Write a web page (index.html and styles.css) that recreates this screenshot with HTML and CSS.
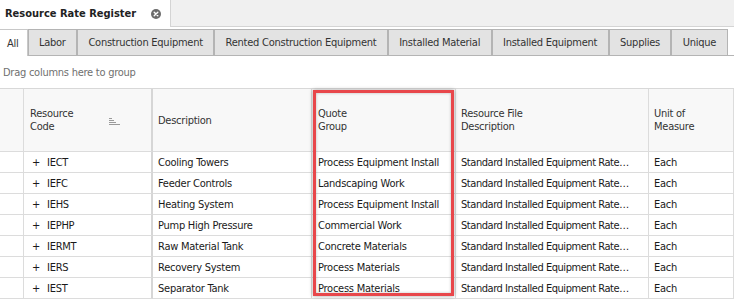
FILE: index.html
```html
<!DOCTYPE html>
<html>
<head>
<meta charset="utf-8">
<link rel="stylesheet" href="styles.css">
</head>
<body>
<div class="app">
  <div class="titlebar">
    <div class="doc-tab">
      <span class="doc-title">Resource Rate Register</span>
      <svg class="close" width="10" height="10" viewBox="0 0 10 10"><circle cx="5" cy="5" r="5" fill="#6b6b6b"/><path d="M3.2 3.2 L6.8 6.8 M6.8 3.2 L3.2 6.8" stroke="#fff" stroke-width="1.4" stroke-linecap="round"/></svg>
    </div>
    <div class="titlebar-rest"></div>
  </div>
  <div class="tabstrip">
    <div class="tab active">All</div>
    <div class="tab">Labor</div>
    <div class="tab">Construction Equipment</div>
    <div class="tab">Rented Construction Equipment</div>
    <div class="tab">Installed Material</div>
    <div class="tab">Installed Equipment</div>
    <div class="tab">Supplies</div>
    <div class="tab">Unique</div>
  </div>
  <div class="grouppanel">Drag columns here to group</div>
  <div class="grid">
    <div class="hcell c0"></div>
    <div class="hcell c1"><span>Resource<br>Code</span>
      <svg class="sorticon" width="12" height="10" viewBox="0 0 12 10"><path d="M0 1.5H3M0 3.5H5M0 5.5H7M0 7.5H11" stroke="#9a9a9a" stroke-width="1"/></svg>
    </div>
    <div class="hcell c2"><span>Description</span></div>
    <div class="hcell c3"><span>Quote<br>Group</span></div>
    <div class="hcell c4"><span>Resource File<br>Description</span></div>
    <div class="hcell c5"><span>Unit of<br>Measure</span></div>

    <div class="cell c0"></div><div class="cell c1"><span class="plus">+</span>IECT</div><div class="cell c2">Cooling Towers</div><div class="cell c3">Process Equipment Install</div><div class="cell c4">Standard Installed Equipment Rate…</div><div class="cell c5">Each</div>
    <div class="cell c0"></div><div class="cell c1"><span class="plus">+</span>IEFC</div><div class="cell c2">Feeder Controls</div><div class="cell c3">Landscaping Work</div><div class="cell c4">Standard Installed Equipment Rate…</div><div class="cell c5">Each</div>
    <div class="cell c0"></div><div class="cell c1"><span class="plus">+</span>IEHS</div><div class="cell c2">Heating System</div><div class="cell c3">Process Equipment Install</div><div class="cell c4">Standard Installed Equipment Rate…</div><div class="cell c5">Each</div>
    <div class="cell c0"></div><div class="cell c1"><span class="plus">+</span>IEPHP</div><div class="cell c2">Pump High Pressure</div><div class="cell c3">Commercial Work</div><div class="cell c4">Standard Installed Equipment Rate…</div><div class="cell c5">Each</div>
    <div class="cell c0"></div><div class="cell c1"><span class="plus">+</span>IERMT</div><div class="cell c2">Raw Material Tank</div><div class="cell c3">Concrete Materials</div><div class="cell c4">Standard Installed Equipment Rate…</div><div class="cell c5">Each</div>
    <div class="cell c0"></div><div class="cell c1"><span class="plus">+</span>IERS</div><div class="cell c2">Recovery System</div><div class="cell c3">Process Materials</div><div class="cell c4">Standard Installed Equipment Rate…</div><div class="cell c5">Each</div>
    <div class="cell c0"></div><div class="cell c1"><span class="plus">+</span>IEST</div><div class="cell c2">Separator Tank</div><div class="cell c3">Process Materials</div><div class="cell c4">Standard Installed Equipment Rate…</div><div class="cell c5">Each</div>
  </div>
  <div class="highlight"></div>
</div>
</body>
</html>
```
FILE: styles.css
```css
html, body {
  margin: 0;
  padding: 0;
  background: #fff;
}
.app {
  position: relative;
  width: 734px;
  height: 300px;
  overflow: hidden;
  font-family: "DejaVu Sans Condensed", "DejaVu Sans", sans-serif;
  font-size: 11px;
  letter-spacing: -0.25px;
  color: #222;
}
.titlebar {
  display: flex;
  height: 27px;
}
.doc-tab {
  width: 170px;
  display: flex;
  align-items: center;
  padding-left: 5px;
  box-sizing: border-box;
  background: #fff;
}
.doc-title {
  font-weight: bold;
  color: #222;
  font-size: 11px;
  letter-spacing: 0;
}
.close {
  margin-left: 15px;
}
.titlebar-rest {
  flex: 1;
  background: #f0f0f0;
  border-left: 1px solid #d4d4d4;
  border-bottom: 1px solid #d4d4d4;
}
.tabstrip {
  display: flex;
  margin-top: 2px;
  height: 26px;
  border-bottom: 1px solid #b4b4b4;
  align-items: stretch;
}
.tab {
  flex: none;
  white-space: nowrap;
  display: flex;
  align-items: center;
  padding: 0 10.4px;
  background: #e3e3e3;
  border: 1px solid #b4b4b4;
  border-bottom: none;
  color: #333;
}
.tab.active {
  background: #fff;
  border-color: #c8c8c8;
  border-left: none;
  padding: 0 8px 0 7px;
  margin-bottom: -1px;
}
.grouppanel {
  height: 32px;
  display: flex;
  align-items: center;
  padding-left: 3px;
  color: #707070;
}
.grid {
  display: grid;
  grid-template-columns: 24px 129px 159px 144px 193px 1fr;
  grid-template-rows: 63px repeat(7, 21px);
  border-top: 1px solid #d8d8d8;
}
.hcell {
  background: #f8f8f8;
  border-right: 1px solid #dcdcdc;
  border-bottom: 1px solid #dcdcdc;
  display: flex;
  align-items: center;
  padding-left: 5px;
  line-height: 13px;
  color: #333;
  position: relative;
}
.cell {
  border-right: 1px solid #dcdcdc;
  border-bottom: 1px solid #dcdcdc;
  display: flex;
  align-items: center;
  padding-left: 5px;
  white-space: nowrap;
  overflow: hidden;
  color: #1a1a1a;
}
.cell.c4 {
  letter-spacing: -0.45px;
}
.c0 { padding-left: 0; }
.c1 { padding-left: 6px; border-right: 2px solid #d6d6d6; }
.c3 { padding-left: 6px; }
.sorticon {
  position: absolute;
  left: 85px;
  top: 28px;
}
.plus {
  width: 17px;
  padding-left: 2px;
  box-sizing: border-box;
}
.highlight {
  position: absolute;
  left: 313px;
  top: 90px;
  width: 141px;
  height: 206px;
  box-sizing: border-box;
  border: 3px solid #e8474b;
  box-shadow: 0 0 4px rgba(0,0,0,0.35), inset 0 0 3px rgba(0,0,0,0.25);
}
```
